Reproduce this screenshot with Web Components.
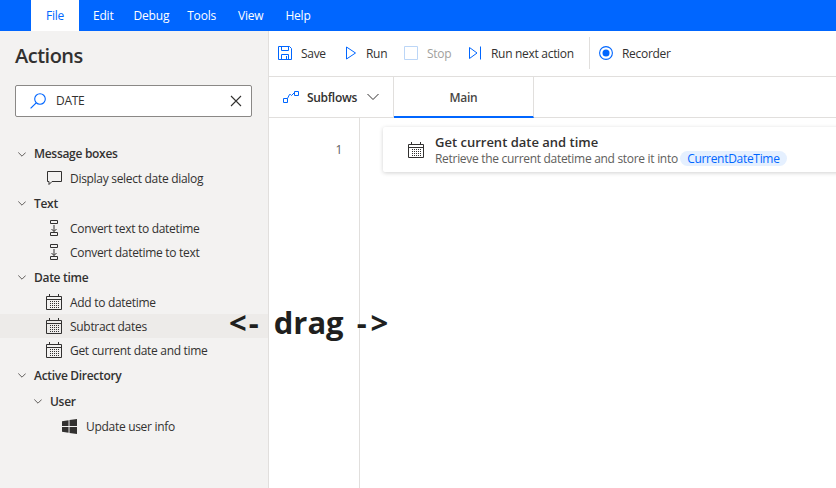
<!DOCTYPE html>
<html lang="en"><head><meta charset="utf-8"><title>Actions</title>
<style>
html,body{margin:0;padding:0;height:100%;overflow:hidden;background:#fff}
body{font:12px/16px "Open Sans","Noto Sans",sans-serif;color:#323130;letter-spacing:-.3px}
</style></head><body>
<app-shell>
  <menu-bar slot="menu"><menu-item active>File</menu-item><menu-item gap="14">Edit</menu-item><menu-item gap="20">Debug</menu-item><menu-item gap="18">Tools</menu-item><menu-item gap="22">View</menu-item><menu-item gap="22">Help</menu-item></menu-bar>
  <side-panel slot="side">
    <tree-row kind="head" h="24">Message boxes</tree-row>
    <tree-row icon="chat">Display select date dialog</tree-row>
    <tree-row kind="head">Text</tree-row>
    <tree-row icon="convert">Convert text to datetime</tree-row>
    <tree-row icon="convert">Convert datetime to text</tree-row>
    <tree-row kind="head">Date time</tree-row>
    <tree-row icon="calendar">Add to datetime</tree-row>
    <tree-row icon="calendar" hover>Subtract dates</tree-row>
    <tree-row icon="calendar">Get current date and time</tree-row>
    <tree-row kind="head">Active Directory</tree-row>
    <tree-row kind="head" level="1">User</tree-row>
    <tree-row icon="windows" level="1">Update user info</tree-row>
  </side-panel>
  <tool-bar slot="tools">
    <tool-button icon="save" w="67">Save</tool-button>
    <tool-button icon="run" w="59">Run</tool-button>
    <tool-button icon="stop" w="64" disabled>Stop</tool-button>
    <tool-button icon="next" w="116">Run next action</tool-button>
    <tool-sep></tool-sep>
    <tool-button icon="record" w="90">Recorder</tool-button>
  </tool-bar>
  <tab-strip slot="tabs"></tab-strip>
  <flow-canvas slot="canvas"></flow-canvas>
  <drag-hint slot="hint"></drag-hint>
</app-shell>
<script>
const ICONS={
 chat:'<svg viewBox="0 0 16 16" width="16" height="16" fill="none" stroke="#323130"><path d="M1.500 1.500h14v10H6l-3 3v-3H1.500z"/></svg>',
 convert:'<svg viewBox="0 0 16 16" width="16" height="16" fill="none" stroke="#323130"><path d="M4.500.5h7v3h-7zM4.500 12.500h7v3h-7z"/><path d="M8 5v6.500M5.500 9 8 11.500 10.500 9"/></svg>',
 calendar:'<svg viewBox="0 0 16 16" width="16" height="16" fill="none" stroke="#323130"><path d="M.5 2.500h15v13H.5zM.5 5.500h15"/><path d="M3.500 0v3M12.500 0v3"/><path d="M4 7.500h9M4 9.500h9M4 11.500h9M4 13.500h9" stroke-dasharray="1 1"/></svg>',
 windows:'<svg viewBox="0 0 16 16" width="15" height="15" style="margin-right:1px" fill="#323130"><path d="M0 2.300 7 1.300V7.500H0zM8 1.100 16 0V7.500H8zM0 8.500H7V14.700L0 13.700zM8 8.500H16V16L8 14.900z"/></svg>',
 save:'<svg viewBox="0 0 14 14" width="14" height="14" fill="none" stroke="#0066ff"><path d="M.5.5h11l2 2v11H.5z"/><path d="M3.500.5v4h7v-4M3.500 13.500v-5h7v5M8.500 10v3.500"/></svg>',
 run:'<svg viewBox="0 0 12 14" width="12" height="14" fill="none" stroke="#0066ff"><path d="M1.500 1 10.500 7 1.500 13z"/></svg>',
 stop:'<svg viewBox="0 0 14 14" width="14" height="14" fill="none" stroke="#bcd6f7"><path d="M.5.500h13v13H.5z"/></svg>',
 next:'<svg viewBox="0 0 14 14" width="14" height="14" fill="none" stroke="#0066ff"><path d="M1.500 1.500 9 7l-7.500 5.500zM12.500 .5v13"/></svg>',
 record:'<svg viewBox="0 0 14 14" width="14" height="14"><circle cx="7" cy="7" r="6.400" fill="none" stroke="#0066ff" stroke-width="1.100"/><circle cx="7" cy="7" r="3.500" fill="#0066ff"/></svg>',
 flows:'<svg viewBox="0 0 16 12" width="16" height="12" fill="none" stroke="#0066ff"><path d="M.5 7.500h4v4h-4zM11.500.5h4v4h-4zM4.500 7.500l2-4h1l1 1 2.500-2.500"/></svg>',
 chev:'<svg viewBox="0 0 12 8" width="12" height="8" fill="none" stroke="#323130"><path d="M.5 1l5.500 5.500L11.500 1"/></svg>',
 chevs:'<svg viewBox="0 0 8 5" width="8" height="5" fill="none" stroke="#605e5c"><path d="M.3.500 4 4.200 7.700.5"/></svg>',
 search:'<svg viewBox="0 0 16 16" width="16" height="16" fill="none" stroke="#0066ff"><circle cx="10" cy="6" r="5.300" stroke-width="1.100"/><path d="M6.200 9.800.6 15.400" stroke-width="1.200"/></svg>',
 close:'<svg viewBox="0 0 12 12" width="12" height="12" fill="none" stroke="#323130" stroke-width="1.100"><path d="M1 1l10 10M11 1 1 11"/></svg>'
};
function def(name,html,init){customElements.define(name,class extends HTMLElement{constructor(){super();this.attachShadow({mode:'open'}).innerHTML=html;}connectedCallback(){init&&init.call(this,this.shadowRoot)}})}
def('ui-icon','<style>:host{display:inline-flex;align-items:center;justify-content:center;flex:none}svg{display:block}</style><span style="display:contents"></span>',function(r){r.querySelector('span').innerHTML=ICONS[this.getAttribute('name')]||''});
def('app-shell',`<style>:host{display:grid;grid-template-columns:269px 1fr;grid-template-rows:31px 46px 41px 1fr;width:836px;height:488px;position:relative;overflow:hidden}
.m{grid-column:1/3}.s{grid-row:2/5}
.h{position:absolute;left:229px;top:301px}</style>
<div class="m"><slot name="menu"></slot></div><div class="s"><slot name="side"></slot></div><slot name="tools"></slot><slot name="tabs"></slot><slot name="canvas"></slot><div class="h"><slot name="hint"></slot></div>`);
def('menu-bar','<style>:host{display:flex;height:31px;background:#0066ff;padding-left:31px}</style><slot></slot>');
def('menu-item',`<style>:host{display:flex;align-items:center;justify-content:center;height:31px;color:#fff;letter-spacing:-.2px;box-sizing:border-box}:host([active]){background:#fff;color:#0066ff;width:48px}</style><slot></slot>`,function(){const g=this.getAttribute('gap');if(g)this.style.marginLeft=g+'px'});
def('side-panel',`<style>:host{display:block;height:457px;background:#f3f2f1;border-right:1px solid #e1dfdd;box-sizing:border-box}
h1{margin:0;padding:13px 0 0 15px;font-size:20px;line-height:24px;font-weight:600;color:#323130;letter-spacing:-.5px}
.s{display:flex;align-items:center;margin:17px 16px 25px 15px;height:32px;box-sizing:border-box;background:#fff;border:1px solid #8a8886;border-radius:2px;padding:0 9px 0 14px}
.t{margin-left:10px;flex:1}</style>
<h1>Actions</h1><div class="s"><ui-icon name="search"></ui-icon><span class="t">DATE</span><ui-icon name="close"></ui-icon></div><slot></slot>`);
def('tree-row',`<style>:host{display:flex;align-items:center;height:24px;padding-left:46px;box-sizing:border-box;white-space:nowrap}
:host([kind=head]){height:26px;padding-left:18px;font-weight:600}
:host([h="24"]){height:24px}:host([hover]){background:#edebe9}
:host([kind=head][level="1"]){padding-left:34px}:host([icon][level="1"]){padding-left:62px}
ui-icon{margin-right:8px}.l{display:block;padding-top:2px}:host([h="24"]) .l{padding-top:0}</style><span id="i" style="display:contents"></span><span class="l"><slot></slot></span>`,function(r){
 r.getElementById('i').innerHTML=`<ui-icon name="${this.getAttribute('kind')==='head'?'chevs':this.getAttribute('icon')}"></ui-icon>`;
});
def('tool-bar','<style>:host{display:flex;align-items:center;height:46px;padding:0 0 1px 9px;border-bottom:1px solid #e1dfdd;box-sizing:border-box}</style><slot></slot>');
def('tool-sep','<style>:host{display:block;width:1px;height:32px;background:#e1dfdd;margin:0 9px 0 5px}</style>');
def('tool-button',`<style>:host{display:flex;align-items:center;height:32px;box-sizing:border-box;white-space:nowrap}:host([disabled]){color:#a19f9d}ui-icon{margin-right:9px}.l{padding-top:2px}</style><span id="i" style="display:contents"></span><span class="l"><slot></slot></span>`,function(r){
 r.getElementById('i').innerHTML=`<ui-icon name="${this.getAttribute('icon')}"></ui-icon>`;this.style.width=this.getAttribute('w')+'px';});
def('tab-strip',`<style>:host{display:flex;height:41px;border-bottom:1px solid #e1dfdd;box-sizing:border-box}
.f{display:flex;align-items:center;width:125px;padding-left:14px;box-sizing:border-box;font-weight:600;gap:8px;border-right:1px solid #e1dfdd}
.m{display:flex;align-items:center;justify-content:center;width:140px;box-sizing:border-box;font-weight:600;border-right:1px solid #e1dfdd;border-bottom:2px solid #0066ff;margin-bottom:-1px;padding-top:3px;color:#484644}
.chev{margin-left:2px}.l{padding-top:2px}</style>
<div class="f"><ui-icon name="flows"></ui-icon><span class="l">Subflows</span><ui-icon class="chev" name="chev"></ui-icon></div><div class="m">Main</div>`);
def('flow-canvas',`<style>:host{display:grid;grid-template-columns:91px 1fr;height:370px}
.g{border-right:1px solid #e1dfdd;text-align:right;padding:24px 17px 0 0;color:#605e5c}
.w{padding:9px 0 8px 23px;overflow:hidden}</style>
<div class="g">1</div><div class="w"><flow-step></flow-step></div>`);
def('flow-step',`<style>:host{display:flex;align-items:center;height:45px;width:480px;background:#fff;box-shadow:0 1px 4px rgba(0,0,0,.18);box-sizing:border-box;padding-left:25px;border-radius:2px}
ui-icon{margin-right:11px}.t{font-size:13px;line-height:17px;font-weight:600;letter-spacing:0}.d{color:#605e5c;line-height:15px}
.v{display:inline-block;background:#e5f0ff;color:#0066ff;border-radius:8px;padding:0 7px 0 7.500px;margin-left:-1px}</style>
<ui-icon name="calendar"></ui-icon><div><div class="t">Get current date and time</div><div class="d">Retrieve the current datetime and store it into <span class="v">CurrentDateTime</span></div></div>`);
def('drag-hint',`<style>:host{display:flex;font-size:31px;line-height:42px;font-weight:700;color:#201f1e;white-space:nowrap;letter-spacing:0}
.a{letter-spacing:2px}.a.e{letter-spacing:4px}.d{margin:0 13px}</style><span class="a">&lt;-</span><span class="d">drag</span><span class="a e">-&gt;</span>`);
</script>
</body></html>
